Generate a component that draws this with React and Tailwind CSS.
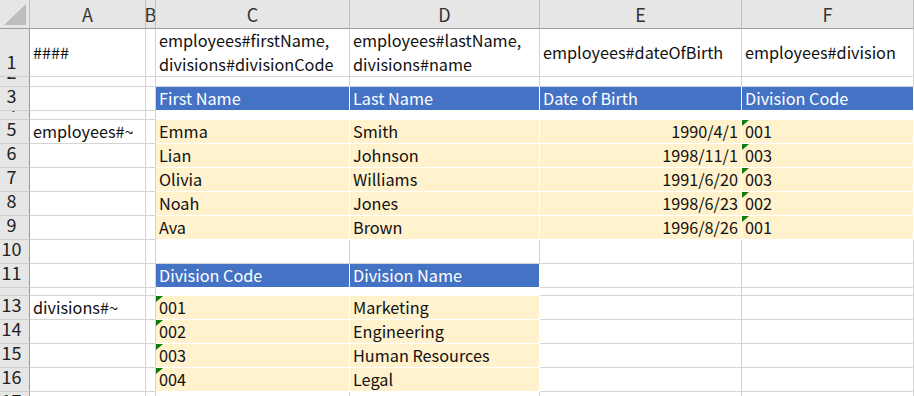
import React from "react";

const COLS = ["A", "B", "C", "D", "E", "F"];

// cell kinds: p = plain gridline, b = blue header, y = yellow data, w = white (no gridlines)
const ROWS = [
  {
    n: "1",
    cells: [
      { k: "p", t: "####" },
      { k: "p" },
      { k: "p", t: "employees#firstName,\ndivisions#divisionCode", wrap: true },
      { k: "p", t: "employees#lastName,\ndivisions#name", wrap: true },
      { k: "p", t: "employees#dateOfBirth" },
      { k: "p", t: "employees#division" },
    ],
  },
  { n: "2", cells: ["p", "p", "p", "p", "p", "p"].map((k) => ({ k })) },
  {
    n: "3",
    cells: [
      { k: "p" },
      { k: "p" },
      { k: "b", t: "First Name" },
      { k: "b", t: "Last Name" },
      { k: "b", t: "Date of Birth" },
      { k: "b", t: "Division Code" },
    ],
  },
  { n: "4", cells: ["p", "p", "w", "w", "w", "w"].map((k) => ({ k })) },
  ...[
    ["employees#~", "Emma", "Smith", "1990/4/1", "001"],
    ["", "Lian", "Johnson", "1998/11/1", "003"],
    ["", "Olivia", "Williams", "1991/6/20", "003"],
    ["", "Noah", "Jones", "1998/6/23", "002"],
    ["", "Ava", "Brown", "1996/8/26", "001"],
  ].map((r, i) => ({
    n: String(5 + i),
    cells: [
      { k: "p", t: r[0] },
      { k: "p" },
      { k: "y", t: r[1] },
      { k: "y", t: r[2] },
      { k: "y", t: r[3], right: true },
      { k: "y", t: r[4], tri: true },
    ],
  })),
  { n: "10", cells: ["p", "p", "p", "p", "p", "p"].map((k) => ({ k })) },
  {
    n: "11",
    cells: [
      { k: "p" },
      { k: "p" },
      { k: "b", t: "Division Code" },
      { k: "b", t: "Division Name" },
      { k: "p" },
      { k: "p" },
    ],
  },
  { n: "12", cells: ["p", "p", "w", "w", "p", "p"].map((k) => ({ k })) },
  ...[
    ["divisions#~", "001", "Marketing"],
    ["", "002", "Engineering"],
    ["", "003", "Human Resources"],
    ["", "004", "Legal"],
  ].map((r, i) => ({
    n: String(13 + i),
    cells: [
      { k: "p", t: r[0] },
      { k: "p" },
      { k: "y", t: r[1], tri: true },
      { k: "y", t: r[2] },
      { k: "p" },
      { k: "p" },
    ],
  })),
  { n: "17", cells: ["p", "p", "p", "p", "p", "p"].map((k) => ({ k })) },
];

const kindClass = {
  p: "bg-white border-[#d4d4d4]",
  b: "bg-[#4472c4] border-white text-white",
  y: "bg-[#fff2cc] border-white",
  w: "bg-white border-white",
};

const Triangle = () => (
  <svg className="absolute left-0 top-0" width="7" height="6" viewBox="0 0 7 6">
    <polygon points="0,0 7,0 0,6" fill="#0e7a0e" />
  </svg>
);

const Cell = ({ cell }) => (
  <div
    className={`relative flex min-w-0 items-center overflow-hidden border-r border-b px-[3px] pb-[2px] text-[16.25px] ${
      kindClass[cell.k]
    } ${cell.right ? "justify-end" : "justify-start"}`}
  >
    {cell.tri && <Triangle />}
    {cell.t && (
      <span
        className={
          cell.wrap
            ? "whitespace-pre-line leading-[24px]"
            : "whitespace-nowrap leading-[22px]"
        }
      >
        {cell.t}
      </span>
    )}
  </div>
);

const RowHeader = ({ n }) => (
  <div className="flex flex-col items-center justify-end overflow-hidden border-r border-b border-r-[#9e9e9e] border-b-[#d0d0d0] bg-[#e6e6e6] pr-[6px] pb-[6px] text-[18px] leading-[18px] text-[#222]">
    <span>{n}</span>
  </div>
);

export default function App() {
  return (
    <div className="h-[396px] w-[914px] overflow-hidden bg-white font-['Noto_Sans_CJK_JP','Noto_Sans',sans-serif] text-[#111]">
      <div className="grid grid-cols-[30px_116px_10px_194px_190px_202px_172px] grid-rows-[29px_48px_10px_24px_9px_24px_24px_24px_24px_24px_24px_24px_8px_24px_24px_24px_24px_24px]">
        <div className="relative border-r border-b border-r-[#c0c0c0] border-b-[#9e9e9e] bg-[#e6e6e6]">
          <svg className="absolute left-0 top-0" width="29" height="28" viewBox="0 0 29 28">
            <polygon points="4,25 26,25 26,4" fill="#bdbdbd" />
          </svg>
        </div>
        {COLS.map((c) => (
          <div
            key={c}
            className="flex items-center justify-center overflow-hidden border-r border-b border-r-[#c0c0c0] border-b-[#9e9e9e] bg-[#e6e6e6] text-[18px] leading-[20px] text-[#333]"
          >
            {c}
          </div>
        ))}
        {ROWS.map((row) => (
          <React.Fragment key={row.n}>
            <RowHeader n={row.n} />
            {row.cells.map((cell, i) => (
              <Cell key={i} cell={cell} />
            ))}
          </React.Fragment>
        ))}
      </div>
    </div>
  );
}
